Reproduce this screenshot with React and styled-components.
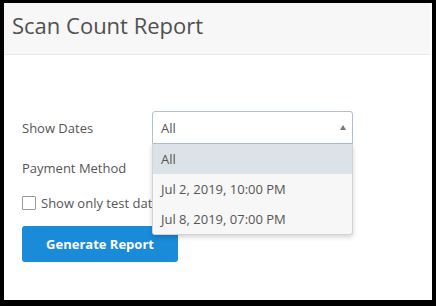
import React from "react";
import styled, { createGlobalStyle } from "styled-components";

const GlobalStyle = createGlobalStyle`
  html, body {
    margin: 0;
    padding: 0;
    background: #000;
  }
  body {
    font-family: "Open Sans", "Noto Sans", sans-serif;
    color: #555;
  }
`;

const Panel = styled.div`
  margin: 3px 4px 0 4px;
  height: 297px;
  background: #fff;
  overflow: hidden;
`;

const Header = styled.div`
  height: 52px;
  padding: 7px 0 0 8px;
  box-sizing: border-box;
  background: #f7f7f7;
  border-bottom: 1px solid #e9e9e9;
  margin-right: 2px;
`;

const Title = styled.h1`
  margin: 0;
  font-size: 22px;
  font-weight: 400;
  line-height: 30px;
  color: #505050;
`;

const Body = styled.div`
  padding: 56px 18px 0 18px;
  display: flex;
  flex-direction: column;
`;

const Row = styled.div`
  display: flex;
  align-items: center;
  height: 33px;
  margin-bottom: ${(p) => p.$gap || 0}px;
`;

const Label = styled.label`
  width: 130px;
  flex: none;
  font-size: 13px;
  color: #555;
`;

const Field = styled.div`
  position: relative;
  width: 201px;
  height: 33px;
`;

const SelectBox = styled.div`
  box-sizing: border-box;
  height: 33px;
  border: 1px solid ${(p) => (p.$open ? "#b3c0cc" : "#ccc")};
  border-radius: ${(p) => (p.$open ? "3px 3px 0 0" : "3px")};
  display: flex;
  align-items: center;
  justify-content: space-between;
  padding: 0 6px 0 8px;
  font-size: 13px;
  color: #555;
  background: #fff;
`;

const Arrow = styled.span`
  width: 0;
  height: 0;
  border-left: 3.5px solid transparent;
  border-right: 3.5px solid transparent;
  border-bottom: 5px solid #777;
`;

const Menu = styled.ul`
  position: absolute;
  top: 33px;
  left: 0;
  width: 201px;
  box-sizing: border-box;
  margin: 0;
  padding: 0;
  list-style: none;
  background: #f7f7f7;
  border: 1px solid #d3d3d3;
  border-top: none;
  border-radius: 0 0 3px 3px;
  box-shadow: 0 2px 5px rgba(0, 0, 0, 0.18);
  z-index: 5;
`;

const Option = styled.li`
  height: 30px;
  line-height: 30px;
  padding-left: 8px;
  font-size: 13px;
  color: #555;
  background: ${(p) => (p.$active ? "#dce3e8" : "transparent")};
`;

const CheckRow = styled.label`
  display: flex;
  align-items: center;
  gap: 5px;
  height: 20px;
  margin-top: 9px;
  font-size: 13px;
  color: #555;
  white-space: nowrap;
`;

const Box = styled.span`
  width: 14px;
  height: 14px;
  box-sizing: border-box;
  border: 1px solid #999;
  border-radius: 1px;
  background: #fff;
`;

const Button = styled.button`
  margin-top: 13px;
  width: 156px;
  height: 36px;
  border: none;
  border-radius: 3px;
  background: #1a8bd9;
  color: #fff;
  font-family: "Open Sans", "Noto Sans", sans-serif;
  font-weight: 700;
  font-size: 13px;
  cursor: pointer;
`;

const options = ["All", "Jul 2, 2019, 10:00 PM", "Jul 8, 2019, 07:00 PM"];

export default function App() {
  return (
    <>
      <GlobalStyle />
      <Panel>
        <Header>
          <Title>Scan Count Report</Title>
        </Header>
        <Body>
          <Row $gap={7}>
            <Label>Show Dates</Label>
            <Field>
              <SelectBox $open>
                All
                <Arrow />
              </SelectBox>
              <Menu>
                {options.map((o, i) => (
                  <Option key={o} $active={i === 0}>
                    {o}
                  </Option>
                ))}
              </Menu>
            </Field>
          </Row>
          <Row>
            <Label>Payment Method</Label>
            <Field>
              <SelectBox />
            </Field>
          </Row>
          <CheckRow>
            <Box />
            Show only test data
          </CheckRow>
          <div>
            <Button>Generate Report</Button>
          </div>
        </Body>
      </Panel>
    </>
  );
}
